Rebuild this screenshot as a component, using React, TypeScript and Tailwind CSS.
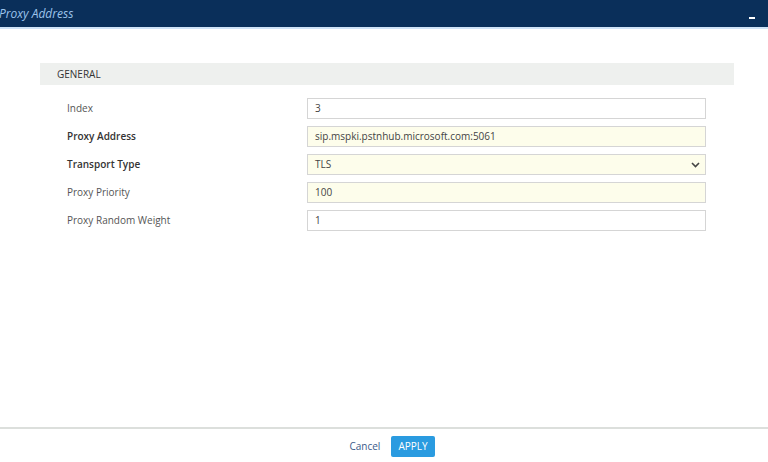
import React from "react";

const font = { fontFamily: '"Open Sans", "Liberation Sans", sans-serif' };

function Row({ label, value, bold, yellow, select }: { label: string; value: string; bold?: boolean; yellow?: boolean; select?: boolean }) {
  return (
    <div className="flex items-center h-[21px]">
      <div className={`w-[267px] pl-[27px] text-[10px] ${bold ? "font-semibold text-[#333]" : "text-[#555]"}`}>{label}</div>
      <div className={`relative flex items-center w-[399px] h-[21px] border border-[#d5d5d5] ${yellow ? "bg-[#fdfdeb]" : "bg-white"} pl-[7px] text-[10px] text-[#444]`}>
        {value}
        {select && (
          <svg className="absolute right-[5px] top-[7px]" width="9" height="6" viewBox="0 0 9 6">
            <path d="M1 1 L4.5 4.5 L8 1" stroke="#444" strokeWidth="1.6" fill="none" />
          </svg>
        )}
      </div>
    </div>
  );
}

export default function App() {
  return (
    <div className="w-[768px] h-[462px] bg-white flex flex-col overflow-hidden" style={font}>
      <div className="h-[27px] bg-[#0a2f5a] flex items-center justify-between shrink-0">
        <span className="italic text-[12px] text-[#9cc4ec] -ml-[1px]">Proxy Address</span>
        <div className="w-[6px] h-[2px] bg-white mr-[13px] mt-[8px]" />
      </div>
      <div className="h-[2px] bg-[#cfe3f7] shrink-0" />
      <div className="flex-1 pl-[40px] pt-[34px]">
        <div className="w-[694px] h-[22px] bg-[#eef0ee] flex items-center pl-[17px] text-[10px] text-[#333]">GENERAL</div>
        <div className="flex flex-col gap-[7px] mt-[13px]">
          <Row label="Index" value="3" />
          <Row label="Proxy Address" value="sip.mspki.pstnhub.microsoft.com:5061" bold yellow />
          <Row label="Transport Type" value="TLS" bold yellow select />
          <Row label="Proxy Priority" value="100" yellow />
          <Row label="Proxy Random Weight" value="1" />
        </div>
      </div>
      <div className="h-[2px] bg-[#dcdfdc] shrink-0" />
      <div className="h-[33px] flex items-center justify-center gap-[11px] shrink-0 pt-[2px] pl-[16px]">
        <span className="text-[10px] text-[#3a5a8a]">Cancel</span>
        <div className="h-[21px] px-[7px] bg-[#2a9be0] rounded-[2px] flex items-center text-[10px] text-white">APPLY</div>
      </div>
    </div>
  );
}
